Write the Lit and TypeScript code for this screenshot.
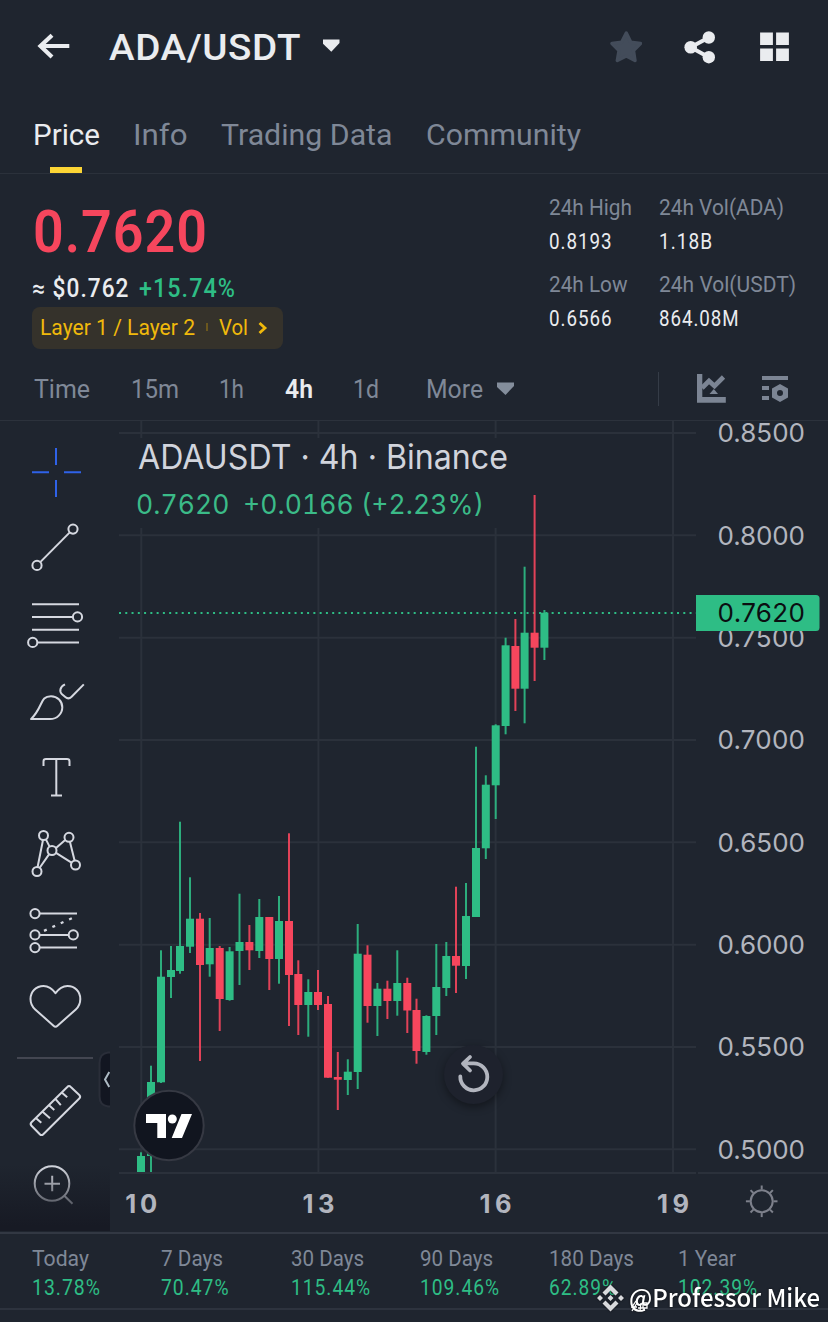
import { LitElement, html, svg, css, nothing } from "lit";
import { customElement } from "lit/decorators.js";

/** One line of text set to an exact advance width; capitals sit on the box's middle. */
const line = (text: string, width: number, size: number, cls = "") => html`
  <svg class="line ${cls}" width=${width} height=${size}>
    <text y=${size * 0.857} font-size=${size} textLength=${width} lengthAdjust="spacingAndGlyphs">${text}</text>
  </svg>`;

type Candle = [up: number, x: number, high: number, top: number, bottom: number, low: number];

const CANDLES: Candle[] = [
  [1, 141, 1152.3, 1156, 1172, 1172],
  [1, 151, 1065.7, 1082, 1156, 1172],
  [1, 161, 950.3, 976.7, 1082.3, 1083],
  [1, 171, 946, 970, 977, 998],
  [1, 180, 821.7, 946, 971, 973.7],
  [1, 190, 877.3, 918.7, 946.7, 953],
  [0, 200, 913, 918.7, 965, 1061],
  [1, 209.7, 918, 948, 964.3, 976.7],
  [0, 219.7, 946, 948, 999, 1031],
  [1, 229.6, 947, 951.3, 1000, 1000.7],
  [1, 239.5, 893.7, 942, 951, 985],
  [0, 249.4, 925, 942, 950.3, 970],
  [1, 259.3, 899, 917, 951, 958],
  [0, 269.3, 917, 917, 959, 990],
  [1, 279, 896, 921, 959, 983.7],
  [0, 289, 833.3, 921, 975, 1026],
  [0, 298.3, 960.3, 974, 1005, 1035],
  [1, 308.3, 979.3, 992, 1005, 1036.7],
  [0, 318, 970, 992, 1005, 1010],
  [0, 328, 996, 1004, 1077.7, 1077.7],
  [0, 337.8, 1052, 1077, 1079.7, 1110],
  [1, 347.8, 1059.3, 1071.7, 1080, 1095],
  [1, 357.7, 924, 953.7, 1072, 1089],
  [0, 367.5, 945.3, 954.7, 1006, 1022.7],
  [1, 377.4, 983, 988.7, 1006, 1036],
  [0, 387.4, 980.7, 988.7, 1001, 1019],
  [1, 397.3, 950.3, 983, 1001, 1015.7],
  [0, 407.3, 977.7, 983, 1010.5, 1033],
  [0, 416.5, 998.7, 1010, 1051, 1063.7],
  [1, 426.4, 1015.3, 1016, 1052, 1054.7],
  [1, 436.3, 944, 987, 1016, 1035],
  [1, 446.3, 942, 956, 988, 996],
  [0, 456, 886.7, 956, 965.7, 993],
  [1, 466, 883, 916, 966, 979],
  [1, 476, 746.7, 848, 917, 917],
  [1, 485.8, 775.3, 784.7, 848.3, 859],
  [1, 495.7, 724.3, 725.3, 785.3, 819],
  [1, 505.6, 637.7, 645.3, 726, 734.3],
  [0, 515.4, 619, 646, 688.7, 711],
  [1, 524.6, 566.7, 632.7, 688.7, 723.3],
  [0, 534.6, 495, 632.7, 647.7, 681],
  [1, 544.4, 610, 612.7, 647.7, 660],
];

const PRICES = ["0.8500", "0.8000", "0.7500", "0.7000", "0.6500", "0.6000", "0.5500", "0.5000"];
const DAYS: [string, number][] = [["10", 141.3], ["13", 318.4], ["16", 495.6], ["19", 673]];

@customElement("price-chart")
class PriceChart extends LitElement {
  static styles = css`
    :host { display: block; height: 811px; }
    svg { display: block; font-family: Inter, sans-serif; }
    .grid { stroke: #2b313b; stroke-width: 2; }
    .axis { fill: #b2b5be; font-size: 26px; }
    .current { fill: #0b0e11; }
    .days { fill: #b2b5be; font-size: 25.5px; font-weight: 700; }
    .up { fill: #2ebd85; }
    .down { fill: #f6465d; }
    .title { fill: #d1d4dc; font-size: 33.5px; }
    .quote { fill: #3bbb88; font-size: 26.5px; font-variant-numeric: tabular-nums; }
    .reset { filter: drop-shadow(0 3px 4px rgba(0, 0, 0, 0.4)); }
  `;

  render() {
    return html`<svg width="718" height="811" viewBox="110 421 718 811">
      <g class="grid">
        ${DAYS.map(([, x]) => svg`<line x1=${x} x2=${x} y1="421" y2="1172"></line>`)}
        ${PRICES.map((_, i) => svg`<line x1="119" x2="696" y1=${433 + i * 102.33} y2=${433 + i * 102.33}></line>`)}
        <path d="M119 1173H696M698 1173H828"></path>
      </g>
      <rect x="133" y="438" width="380" height="90" fill="#1f252f"></rect>
      <line x1="119" x2="696" y1="613" y2="613" stroke="#2ebd85" stroke-width="2" stroke-dasharray="2 4.27"></line>
      ${CANDLES.map(([up, x, high, top, bottom, low]) => svg`<g class=${up ? "up" : "down"}>
        <rect x=${x - 1} y=${high} width="2" height=${low - high} opacity="0.9"></rect>
        <rect x=${x - 4} y=${top} width="8" height=${bottom - top}></rect>
      </g>`)}

      <text class="title" x="138" y="469" textLength="370" lengthAdjust="spacingAndGlyphs">ADAUSDT · 4h · Binance</text>
      <text class="quote" x="136" y="514" textLength="93.5">0.7620</text>
      <text class="quote" x="243" y="514" textLength="241">+0.0166 (+2.23%)</text>

      ${PRICES.map((p, i) => svg`<text class="axis" x="717.5" y=${442.4 + i * 102.33} textLength="87.5">${p}</text>`)}
      <path d="M696 595H816Q819.5 595 819.5 598.5V627.5Q819.5 631 816 631H696Z" fill="#2ebd85"></path>
      <text class="axis current" x="717.5" y="622.4" textLength="87.5">0.7620</text>
      ${DAYS.map(([d, x]) => svg`<text class="days" x=${x - 16} y="1212.8" textLength="32">${d}</text>`)}

      <circle cx="169" cy="1125.5" r="34.7" fill="#11151f" stroke="#363943" stroke-width="2"></circle>
      <g fill="#fff">
        <path d="M146 1114H166V1138H157.3V1123H146ZM181.5 1114H192L182 1138H171.7Z"></path>
        <circle cx="172.3" cy="1119" r="4.5"></circle>
      </g>

      <circle class="reset" cx="473.5" cy="1074.5" r="29.5" fill="#1e222d"></circle>
      <path d="M460.3 1076.5A13.5 13.5 0 1 0 473.8 1063.3H463.5M470 1057L463 1063.7L470 1070.5"
        fill="none" stroke="#b2b5be" stroke-width="3.8" stroke-linecap="round" stroke-linejoin="round"></path>

      <g fill="none" stroke="#7d808b" stroke-width="2">
        <circle cx="761.7" cy="1201.3" r="11"></circle>
        ${[0, 45, 90, 135, 180, 225, 270, 315].map((a) => svg`<path d="M773.5 1201.3H777.5" transform="rotate(${a} 761.7 1201.3)"></path>`)}
      </g>
    </svg>`;
  }
}

const TOOLS = [
  svg`<path stroke="#2f62e8" d="M56 448V465M56 480V497M32 472.3H49M64 472.3H81"></path>`,
  svg`<circle cx="73" cy="529.5" r="4.6"></circle><circle cx="37" cy="565.8" r="4.6"></circle><path d="M40.5 562.3L69.5 533"></path>`,
  svg`<circle cx="77.5" cy="616.7" r="4.6"></circle><circle cx="32.7" cy="642.2" r="4.6"></circle><path d="M32 604H79M32 616.7H73M32 629.5H79M37 642.2H79"></path>`,
  svg`<path d="M31 719.3C43.5 707 39.5 696.4 51 696.4C57.5 696.4 62.3 701.5 62.3 707.5C62.3 714 57 719.3 50 719.3Z"></path><path d="M65 684.6C60 687 59 691.5 62 694.5L65.3 697.3Q68.5 700 71.6 697L83.8 684.6"></path>`,
  svg`<path d="M43.5 765.5V761Q43.5 758.7 46 758.7H67Q69.5 758.7 69.5 761V765.5M56.3 759V795M51 795.2H62"></path>`,
  svg`<circle cx="43.5" cy="835.5" r="4.5"></circle><circle cx="69" cy="837.3" r="4.5"></circle><circle cx="52" cy="850.5" r="4.5"></circle><circle cx="75.5" cy="865" r="4.5"></circle><circle cx="37" cy="871.5" r="4.5"></circle>
    <path d="M43 840L37.6 867M45.9 839.4L49.6 846.6M56 848L65.2 839.9M56 852.8L71.5 862.6M69.9 841.8L74.6 860.5M39.7 867.8L49.2 854.1"></path>`,
  svg`<circle cx="35" cy="914" r="4.6"></circle><circle cx="35" cy="935.3" r="4.6"></circle><circle cx="73.3" cy="935.3" r="4.6"></circle><circle cx="35" cy="948" r="4.6"></circle>
    <path d="M40 914H77M40 935.3H69M40 948H77"></path><path stroke-dasharray="3 6.2" stroke-width="2.3" d="M44 931.3L76 916.7"></path>`,
  svg`<path d="M55.5 993C52 988 48 985.7 43.5 985.7C36 985.7 30.5 991.5 30.5 998.7C30.5 1003 32.3 1006.5 35.2 1009.2L53.5 1025.6Q55.5 1027.4 57.5 1025.6L75.8 1009.2C78.7 1006.5 80.3 1003 80.3 998.7C80.3 991.5 75 985.7 67.5 985.7C63 985.7 59 988 55.5 993Z"></path>`,
];

@customElement("drawing-tools")
class DrawingTools extends LitElement {
  static styles = css`
    :host { display: block; position: relative; height: 810px; width: 110px; overflow: hidden; box-sizing: border-box; padding-top: 13px; }
    :host::after { content: ""; position: absolute; inset: auto 0 0 0; height: 66px; background: linear-gradient(rgba(23, 26, 36, 0), #171a24 92%); }
    svg { display: block; fill: none; stroke: #d5d8e0; stroke-width: 2; stroke-linejoin: round; }
    .rule { height: 2px; width: 76px; margin: 12px 0 13.6px 17px; background: #434651; }
    .collapse { position: absolute; right: 0; top: 630px; }
  `;

  render() {
    const cell = (y: number, icon: unknown) => html`<svg width="110" height="76.4" viewBox="0 ${y} 110 76.4">${icon}</svg>`;
    return html`
      ${TOOLS.map((icon, i) => cell(434 + i * 76.4, icon))}
      <div class="rule"></div>
      ${cell(1072.8, svg`<path d="M67.3 1086.8Q69 1085 70.8 1086.8L79.3 1094.8Q81 1096.5 79.3 1098.3L43.3 1134Q41.5 1135.8 39.8 1134L31.5 1125.5Q29.8 1123.8 31.5 1122ZM35.8 1117.7L41.3 1122.5M42.3 1111.3L50 1118M48.8 1104.9L54.3 1109.7M55.2 1098.5L60.8 1105M61.7 1092.2L67.2 1097"></path>`)}
      ${cell(1149.2, svg`<circle cx="52" cy="1183.7" r="17.3"></circle><path d="M44.5 1183.9H60M52.2 1176V1191.5M64.3 1196L72.5 1204"></path>`)}
      <svg class="collapse" width="12" height="57" viewBox="0 0 12 57">
        <path d="M14 1.5H10Q1.5 2.5 1.5 12V45Q1.5 54.5 10 55.5H14" fill="#121621" stroke="#2a2e39"></path>
        <path d="M11.3 21L7 28.5L11.3 36" stroke="#aebbc5"></path>
      </svg>`;
  }
}

const TABS: [string, number][] = [["Price", 67], ["Info", 54.5], ["Trading Data", 171.5], ["Community", 155]];

const STATS: [string, number, string, number][] = [
  ["24h High", 83, "0.8193", 63.5],
  ["24h Vol(ADA)", 125, "1.18B", 54],
  ["24h Low", 78.5, "0.6566", 63.5],
  ["24h Vol(USDT)", 137, "864.08M", 80.5],
];

const RETURNS: [string, number, string, number][] = [
  ["Today", 57, "13.78%", 68],
  ["7 Days", 62, "70.47%", 67.5],
  ["30 Days", 73, "115.44%", 79],
  ["90 Days", 73, "109.46%", 79],
  ["180 Days", 85, "62.89%", 67],
  ["1 Year", 58, "102.39%", 79],
];

@customElement("app-root")
class AppRoot extends LitElement {
  static styles = css`
    :host { display: flex; flex-direction: column; position: relative; width: 828px; height: 1322px; overflow: hidden; background: #1f252f; font-family: Roboto, sans-serif; color: #eaecef; }
    svg { display: block; flex: none; }
    .line { fill: currentColor; overflow: visible; }
    .muted { color: #7f8897; }
    .book { font-weight: 450; }
    .medium { font-weight: 500; }
    .semi { font-weight: 600; }
    .num { letter-spacing: 0.07em; }
    .wide { letter-spacing: 0.035em; }
    .green { color: #2ebd85; }
    .red { color: #f6465d; }

    header { display: flex; align-items: center; height: 94px; padding: 0 38px 0 36px; box-sizing: border-box; }
    .back { margin-top: -2px; }
    .pair { display: flex; align-items: center; gap: 22px; margin-left: 39px; flex: 1; }
    .pair .down { margin-top: -2px; }
    .actions { display: flex; gap: 42px; }

    nav { display: flex; gap: 33.5px; height: 80px; padding-left: 32.5px; box-sizing: border-box; border-bottom: 1.5px solid #2b313b; }
    .tab { display: flex; flex-direction: column; align-items: center; justify-content: space-between; padding-top: 26px; }
    .mark { width: 32px; height: 6px; background: #fcd535; }

    .summary { display: flex; justify-content: space-between; height: 175px; padding: 27px 32.5px 0 32px; box-sizing: border-box; }
    .fiat { display: flex; gap: 9px; margin-top: 15px; }
    .last { margin-left: 1px; }
    .chip { display: flex; align-items: center; width: 251px; height: 42px; margin-top: 5.5px; padding: 1px 0 0 8px; box-sizing: border-box; border-radius: 8px; background: #35322b; color: #f0b90b; }
    .bar { width: 2px; height: 8px; margin: -3px 11px 0 11px; background: #6b571e; }
    .chip .arrow { margin-left: 9.5px; }
    .stats { display: grid; grid-template-columns: 110px 137px; grid-auto-rows: 76.5px; margin-top: -5px; }
    .stat { display: flex; flex-direction: column; gap: 12px; }

    .intervals { display: flex; align-items: center; height: 72px; padding: 9px 39px 0 34px; box-sizing: border-box; border-bottom: 1.5px solid #2c323c; }
    .span { margin-right: 40.5px; }
    .day { margin-right: 46.5px; }
    .caret { margin-left: 14px; }
    .split { width: 1.5px; height: 34px; margin: 0 38px 0 auto; background: #353c47; }
    .indicators { display: flex; gap: 36px; margin-top: -1px; }

    main { display: grid; grid-template-columns: 110px 718px; height: 811px; }
    footer { display: grid; grid-template-columns: repeat(6, 129.3px); height: 78px; padding: 12.5px 0 0 32px; box-sizing: border-box; border-top: 2px solid #323843; border-bottom: 2px solid #2d333e; }
    .period { display: flex; flex-direction: column; gap: 7.5px; }

    .watermark { position: absolute; right: 8px; bottom: 10px; display: flex; align-items: center; gap: 5px; color: #fff; font-family: "Noto Sans CJK SC", "Noto Sans", sans-serif; filter: drop-shadow(0 0 1px rgba(0, 0, 0, 0.6)); }
    .seal { position: absolute; left: 34px; top: 16px; }
  `;

  render() {
    return html`
      <header>
        <svg class="back" width="34" height="28" viewBox="36 32 34 28" fill="none" stroke="#eaecef" stroke-width="4.2"><path d="M52 35.3L40.5 46L52 57M41 46H69.3"></path></svg>
        <div class="pair">
          ${line("ADA/USDT", 192, 37.5, "medium wide")}
          <svg class="down" width="17" height="16" viewBox="323 38.5 17 16"><path d="M323 40H339.5V43.5L331.3 52.3L323 44.3Z" fill="#eaecef"></path></svg>
        </div>
        <div class="actions">
          <svg width="32" height="32" viewBox="610 31 32 32"><path d="M626.3 33L630.8 42.2L640.5 43.5L633.5 50.6L635 60.5L626.3 56L617.3 60.5L619 50.6L612 43.5L621.6 42.2Z" fill="#434c5a" stroke="#434c5a" stroke-width="3.4" stroke-linejoin="round"></path></svg>
          <svg width="33" height="33" viewBox="684 30.5 33 33" fill="#eaecef"><circle cx="690.7" cy="46.8" r="6.3"></circle><circle cx="708.8" cy="37" r="6.2"></circle><circle cx="708.8" cy="56.7" r="6.2"></circle><path d="M708.8 37L690.7 46.8L708.8 56.7" fill="none" stroke="#eaecef" stroke-width="4"></path></svg>
          <svg width="31" height="32" viewBox="759.5 31 31 32"><path d="M760.6 32.5h12.8v12.6h-12.8zM776.6 32.5h12.8v12.6h-12.8zM760.6 48.4h12.8v12.6h-12.8zM776.6 48.4h12.8v12.6h-12.8z" fill="#eaecef"></path></svg>
        </div>
      </header>

      <nav>
        ${TABS.map(([name, w], i) => html`<div class="tab">
          ${line(name, w, 29, i ? "book muted" : "book")}
          ${i ? nothing : html`<div class="mark"></div>`}
        </div>`)}
      </nav>

      <section class="summary">
        <div>
          ${line("0.7620", 175, 60, "semi red last num")}
          <div class="fiat">
            ${line("≈ $0.762", 97.5, 25, "medium num")}
            ${line("+15.74%", 97, 25, "medium green num")}
          </div>
          <div class="chip">
            ${line("Layer 1 / Layer 2", 155, 21.5)}
            <div class="bar"></div>
            ${line("Vol", 29, 21.5)}
            <svg class="arrow" width="10" height="14" fill="none" stroke="#f0b90b" stroke-width="2.8"><path d="M1.5 2L7 7L1.5 12"></path></svg>
          </div>
        </div>
        <div class="stats">
          ${STATS.map(([name, nw, value, vw]) => html`<div class="stat">
            ${line(name, nw, 22, "muted")}${line(value, vw, 22, "num")}
          </div>`)}
        </div>
      </section>

      <section class="intervals">
        ${line("Time", 56, 25.5, "muted span")}
        ${line("15m", 48, 25.5, "muted span")}
        ${line("1h", 25, 25.5, "muted span")}
        ${line("4h", 28, 25.5, "semi span")}
        ${line("1d", 26, 25.5, "muted day")}
        ${line("More", 57, 25.5, "muted")}
        <svg class="caret" width="17" height="14"><path d="M0 0.5H17V4L8.5 13L0 5Z" fill="#848e9c"></path></svg>
        <div class="split"></div>
        <div class="indicators">
          <svg width="29" height="30" viewBox="697 374 29 30" fill="#7c8594"><path d="M697 374H702.3V397H725.8V402.7H697Z"></path><path d="M702 388L709 381L714.5 386L723.5 377" fill="none" stroke="#7c8594" stroke-width="4.6"></path><path d="M709.5 394H718L713.8 389Z"></path></svg>
          <svg width="27" height="30" viewBox="762 374 27 30" fill="#7c8594"><path d="M762 376H788V380H762ZM762 386H769V390H762ZM762 396H769V400H762Z"></path><path fill-rule="evenodd" d="M780 384L788 388.5V397.5L780 402L772 397.5V388.5ZM780 390A3 3 0 1 0 780 396A3 3 0 1 0 780 390Z"></path></svg>
        </div>
      </section>

      <main>
        <drawing-tools></drawing-tools>
        <price-chart></price-chart>
      </main>

      <footer>
        ${RETURNS.map(([name, nw, value, vw]) => html`<div class="period">
          ${line(name, nw, 22, "muted")}${line(value, vw + 1, 22, "green num")}
        </div>`)}
      </footer>

      <div class="watermark">
        <svg width="27" height="28" viewBox="0 0 27 28" fill="#d9dadd"><path d="M13.5 0.5L21.5 8.5L18.5 11.5L13.5 6.5L8.5 11.5L5.5 8.5ZM13.5 27.5L21.5 19.5L18.5 16.5L13.5 21.5L8.5 16.5L5.5 19.5ZM3 11L6 14L3 17L0 14ZM24 11L27 14L24 17L21 14ZM13.5 11L16.5 14L13.5 17L10.5 14Z"></path></svg>
        ${line("@Professor Mike", 191, 24.5, "medium")}
        <svg class="seal" width="18" height="12" fill="none" stroke="#fff" stroke-width="1.3"><path d="M5 1L1 7H6M6 3L1 11M7 8H12M10 3L9 11M12 3H16V8H12ZM13 8V11"></path></svg>
      </div>`;
  }
}
